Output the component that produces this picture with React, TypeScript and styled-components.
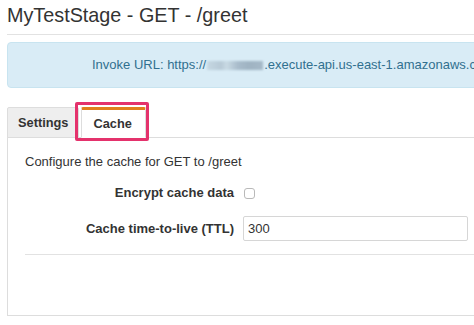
import React from "react";
import styled, { createGlobalStyle } from "styled-components";

const GlobalStyle = createGlobalStyle`
  html, body {
    margin: 0;
    padding: 0;
    background: #ffffff;
    overflow: hidden;
  }
  body {
    font-family: "Liberation Sans", Arial, Helvetica, sans-serif;
    color: #333333;
  }
`;

const Page = styled.div`
  width: 560px;
  padding: 0 0 0 7px;
  box-sizing: border-box;
`;

const Title = styled.h2`
  margin: 0;
  padding: 3px 0 7px 0;
  font-size: 19.8px;
  line-height: 24px;
  font-weight: normal;
  color: #333333;
  border-bottom: 1px solid #e2e2e2;
`;

const InfoBox = styled.div`
  margin-top: 7px;
  height: 46px;
  box-sizing: border-box;
  background: #d9ecf6;
  border: 1px solid #c8e4f0;
  border-radius: 4px;
  padding-left: 84px;
  line-height: 44px;
  font-size: 13px;
  color: #31708f;
  white-space: nowrap;
  overflow: hidden;
`;

const Blurred = styled.span`
  display: inline-block;
  width: 56px;
  height: 9px;
  margin: 0 1px;
  vertical-align: -1px;
  background: linear-gradient(
    90deg,
    #c6d7e2 0%,
    #b8cad6 25%,
    #c9dae4 35%,
    #a9bccb 55%,
    #9fb3c2 75%,
    #a6b9c8 100%
  );
  filter: blur(1.2px);
`;

const TabBar = styled.div`
  margin-top: 19px;
  display: flex;
  align-items: flex-end;
  position: relative;
  z-index: 2;
`;

const Tab = styled.div<{ $active?: boolean }>`
  position: relative;
  height: 31px;
  box-sizing: border-box;
  padding: ${(p) => (p.$active ? "0 13px 0 11px" : "0 10px")};
  margin-right: 2px;
  margin-bottom: -1px;
  display: flex;
  align-items: center;
  font-size: 12.8px;
  font-weight: bold;
  color: #333333;
  background: ${(p) => (p.$active ? "#ffffff" : "#eeeeee")};
  border: 1px solid #dddddd;
  border-top: ${(p) => (p.$active ? "3px solid #e07f1d" : "1px solid #dddddd")};
  border-bottom-color: ${(p) => (p.$active ? "#ffffff" : "#dddddd")};
  border-radius: 2px 2px 0 0;
`;

const Highlight = styled.span`
  position: absolute;
  top: -8px;
  left: -7px;
  right: -4px;
  bottom: -4px;
  border: 3px solid #e4326c;
  border-radius: 2px;
  pointer-events: none;
`;

const Panel = styled.div`
  border: 1px solid #dddddd;
  padding: 15px 0 60px 17px;
  position: relative;
  z-index: 1;
`;

const Intro = styled.p`
  margin: 0;
  font-size: 13px;
  line-height: 18px;
  color: #333333;
`;

const Form = styled.div`
  margin-top: 12px;
  display: grid;
  grid-template-columns: 209px 225px;
  column-gap: 9px;
  row-gap: 13px;
  align-items: center;
`;

const Label = styled.label`
  text-align: right;
  font-size: 13px;
  font-weight: bold;
  color: #333333;
  line-height: 20px;
`;

const Check = styled.input`
  appearance: none;
  margin: 0 0 0 1px;
  width: 11px;
  height: 11px;
  border: 1px solid #b9b9b9;
  border-radius: 3px;
  background: #ffffff;
  justify-self: start;
`;

const TextInput = styled.input`
  height: 25px;
  width: 225px;
  box-sizing: border-box;
  border: 1px solid #d6d6d6;
  border-radius: 2px;
  padding: 0 4px;
  font-family: "Liberation Sans", Arial, Helvetica, sans-serif;
  font-size: 13px;
  color: #333333;
  outline: none;
`;

const Divider = styled.hr`
  margin: 13px 0 0 0;
  border: none;
  border-top: 1px solid #e2e2e2;
`;

export default function App() {
  return (
    <>
      <GlobalStyle />
      <Page>
        <Title>MyTestStage - GET - /greet</Title>
        <InfoBox>
          Invoke URL: https://
          <Blurred />
          .execute-api.us-east-1.amazonaws.com
        </InfoBox>
        <TabBar>
          <Tab>Settings</Tab>
          <Tab $active>
            Cache
            <Highlight />
          </Tab>
        </TabBar>
        <Panel>
          <Intro>Configure the cache for GET to /greet</Intro>
          <Form>
            <Label htmlFor="encrypt">Encrypt cache data</Label>
            <Check id="encrypt" type="checkbox" />
            <Label htmlFor="ttl">Cache time-to-live (TTL)</Label>
            <TextInput id="ttl" defaultValue="300" />
          </Form>
          <Divider />
        </Panel>
      </Page>
    </>
  );
}
